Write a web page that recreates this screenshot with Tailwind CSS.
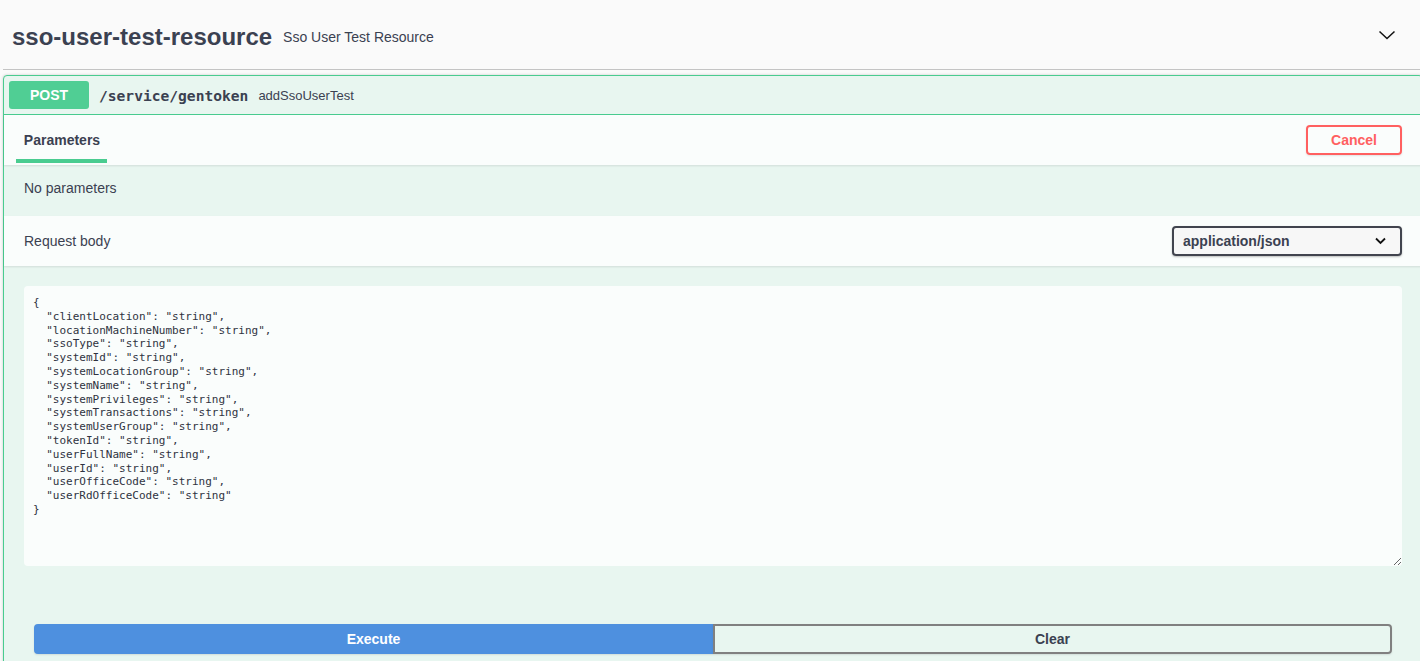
<!DOCTYPE html>
<html lang="en">
<head>
  <meta charset="UTF-8" />
  <title>sso-user-test-resource</title>
  <script src="https://cdn.jsdelivr.net/npm/@tailwindcss/browser@4"></script>
</head>
<body class="bg-[#fafafa] font-['Liberation_Sans',Arial,sans-serif] text-[#3b4151] h-[661px] overflow-hidden">

  <!-- tag header -->
  <div class="ml-[3px] h-[70px] border-b border-[#c4c4c4] flex items-center pl-[9px] pr-[23px]">
    <h2 class="text-[24px] font-bold leading-none mt-[4px]">sso-user-test-resource</h2>
    <span class="text-sm ml-[11px] mt-[5px]">Sso User Test Resource</span>
    <svg class="ml-auto" width="20" height="20" viewBox="0 0 20 20" fill="none" stroke="#111" stroke-width="1.5"><path d="M2.5 6.5 L10 13.5 L17.5 6.5" /></svg>
  </div>

  <!-- opblock -->
  <div class="ml-[3px] mt-[5px] -mr-[3px] border border-[#49cc90] rounded bg-[#e8f6f0] shadow-[0_0_3px_rgba(0,0,0,0.19)]">
    <div class="h-[39px] border-b border-[#49cc90] flex items-center pl-[5px]">
      <span class="w-[80px] h-[28px] rounded-[3px] bg-[#50ce94] text-white text-sm font-bold flex items-center justify-center">POST</span>
      <span class="ml-[10px] mt-[2px] font-['DejaVu_Sans_Mono',monospace] text-[14.6px] font-bold">/service/gentoken</span>
      <span class="ml-[10px] mt-[2px] text-[13px]">addSsoUserTest</span>
    </div>

    <div class="h-[50px] bg-white/80 shadow-[0_1px_2px_rgba(0,0,0,0.1)] flex items-center pl-[12px] pr-[20px]">
      <div class="self-start h-[48px] w-[91px] border-b-4 border-[#49cc90] text-sm font-bold flex items-center justify-center pt-[6px] pl-[1px]">Parameters</div>
      <button class="ml-auto w-[96px] h-[30px] border-2 border-[#ff6060] rounded text-[#ff6060] text-sm font-bold bg-transparent shadow-[0_1px_2px_rgba(0,0,0,0.1)]">Cancel</button>
    </div>

    <div class="h-[51px] flex items-center pl-[20px] pb-[5px] text-sm">No parameters</div>

    <div class="h-[50px] bg-white/80 shadow-[0_1px_2px_rgba(0,0,0,0.1)] flex items-center pl-[20px] pr-[20px] text-sm">
      <span>Request body</span>
      <div class="ml-auto relative w-[230px] h-[30px]">
        <select class="appearance-none w-full h-full border-2 border-[#41444e] rounded bg-[#f7f7f7] pl-[9px] text-sm font-bold shadow-[0_1px_2px_rgba(0,0,0,0.25)]">
          <option>application/json</option>
        </select>
        <svg class="absolute right-[16px] top-[11px]" width="11" height="8" viewBox="0 0 11 8" fill="none" stroke="#111" stroke-width="1.8"><path d="M1 1.5 L5.5 6 L10 1.5" /></svg>
      </div>
    </div>

    <div class="pt-[20px] pl-[20px] pr-[20px]">
      <textarea spellcheck="false" class="block w-full h-[280px] resize-y rounded bg-white/80 py-[10px] pl-[9px] pr-[10px] outline-none font-['DejaVu_Sans_Mono',monospace] text-[11px] leading-[13.8px] font-normal text-[#2f3341]">{
  "clientLocation": "string",
  "locationMachineNumber": "string",
  "ssoType": "string",
  "systemId": "string",
  "systemLocationGroup": "string",
  "systemName": "string",
  "systemPrivileges": "string",
  "systemTransactions": "string",
  "systemUserGroup": "string",
  "tokenId": "string",
  "userFullName": "string",
  "userId": "string",
  "userOfficeCode": "string",
  "userRdOfficeCode": "string"
}</textarea>
    </div>

    <div class="flex mt-[58px] pl-[30px] pr-[30px] h-[30px]">
      <button class="w-1/2 bg-[#4e90df] border-2 border-[#4e90df] rounded-l text-white text-sm font-bold shadow-[0_1px_2px_rgba(0,0,0,0.1)]">Execute</button>
      <button class="w-1/2 border-2 border-[#808080] rounded-r text-[#3b4151] text-sm font-bold shadow-[0_1px_2px_rgba(0,0,0,0.1)]">Clear</button>
    </div>
    <div class="h-[20px]"></div>
  </div>

</body>
</html>
